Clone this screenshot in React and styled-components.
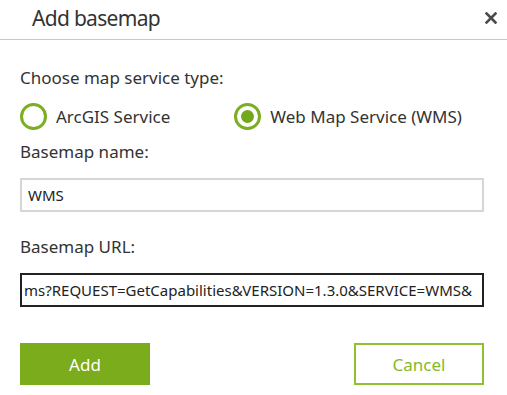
import React, { useState } from 'react'
import styled, { createGlobalStyle } from 'styled-components';

const GlobalStyle = createGlobalStyle`
  body {
    margin: 0;
    background: #fff;
    font-family: "Noto Sans", "Open Sans", sans-serif;
    color: #333;
  }
`;

const App = () => {
  const [type, setType] = useState('wms');
  return (
    <Dialog>
      <GlobalStyle />
      <Header>
        <Title>Add basemap</Title>
        <CloseButton aria-label="Close">
          <svg width="12" height="12" viewBox="0 0 12 12">
            <path d="M1.5 1.5 L10.5 10.5 M10.5 1.5 L1.5 10.5" stroke="#4a4a4a" strokeWidth="2.6" strokeLinecap="square" />
          </svg>
        </CloseButton>
      </Header>
      <Body>
        <Label>Choose map service type:</Label>
        <RadioRow>
          <RadioOption onClick={() => setType('arcgis')}>
            <RadioCircle $checked={type === 'arcgis'} />
            <span>ArcGIS Service</span>
          </RadioOption>
          <RadioOption onClick={() => setType('wms')}>
            <RadioCircle $checked={type === 'wms'} />
            <span>Web Map Service (WMS)</span>
          </RadioOption>
        </RadioRow>
        <Label $top={12}>Basemap name:</Label>
        <TextInput defaultValue="WMS" />
        <Label $top={25}>Basemap URL:</Label>
        <TextInput $focused $pad={2} defaultValue="ms?REQUEST=GetCapabilities&VERSION=1.3.0&SERVICE=WMS&" />
        <Buttons>
          <Button $primary>Add</Button>
          <Button>Cancel</Button>
        </Buttons>
      </Body>
    </Dialog>
  )
}

export default App

const Dialog = styled.div`
  width: 507px;
  height: 395px;
  background: #fff;
`;

const Header = styled.div`
  height: 40px;
  display: flex;
  align-items: center;
  justify-content: space-between;
  padding: 0 10px 0 32px;
  border-bottom: 1px solid #c8c8c8;
  box-sizing: border-box;
`;

const Title = styled.h1`
  margin: 0 0 3px;
  font-size: 21px;
  letter-spacing: -0.7px;
  font-weight: 400;
  color: #333;
  line-height: 28px;
`;

const CloseButton = styled.button`
  all: unset;
  display: flex;
  width: 12px;
  height: 12px;
  margin-bottom: 4px;
  cursor: pointer;
`;

const Body = styled.div`
  padding: 28px 23px 0 20px;
  display: flex;
  flex-direction: column;
`;

const Label = styled.div`
  margin-top: ${p => p.$top || 0}px;
  font-size: 17px;
  line-height: 20px;
  color: #333;
`;

const RadioRow = styled.div`
  margin-top: 14px;
  display: flex;
  gap: 64px;
  height: 28px;
`;

const RadioOption = styled.label`
  display: flex;
  align-items: center;
  gap: 9px;
  font-size: 17px;
  color: #333;
  cursor: pointer;
`;

const RadioCircle = styled.span`
  width: 27px;
  height: 27px;
  box-sizing: border-box;
  border-radius: 50%;
  border: 3px solid #7dad22;
  display: flex;
  align-items: center;
  justify-content: center;
  &::after {
    content: '';
    display: ${p => (p.$checked ? 'block' : 'none')};
    width: 13px;
    height: 13px;
    border-radius: 50%;
    background: #74a81b;
  }
`;

const TextInput = styled.input`
  margin-top: 16px;
  width: 464px;
  height: 34px;
  box-sizing: border-box;
  padding: 0 ${p => p.$pad || 6}px;
  border: 2px solid ${p => (p.$focused ? '#222' : '#d6d6d6')};
  font-family: "Noto Sans", "Open Sans", sans-serif;
  font-size: 15px;
  color: #222;
  outline: none;
  background: #fff;
`;

const Buttons = styled.div`
  margin-top: 36px;
  width: 464px;
  display: flex;
  justify-content: space-between;
`;

const Button = styled.button`
  width: 130px;
  height: 42px;
  box-sizing: border-box;
  border: 2px solid ${p => (p.$primary ? '#7aac1c' : '#8fc12e')};
  background: ${p => (p.$primary ? '#7aac1c' : '#fff')};
  color: ${p => (p.$primary ? '#fff' : '#86b92a')};
  font-family: "Noto Sans", "Open Sans", sans-serif;
  font-size: 17px;
  cursor: pointer;
`;
